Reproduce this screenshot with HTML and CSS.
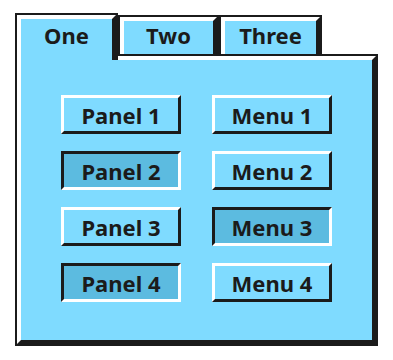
FILE: index.html
```html
<!DOCTYPE html>
<html>
<head>
<meta charset="utf-8">
<link rel="stylesheet" href="styles.css">
</head>
<body>
<div class="frame">
  <div class="tabs">
    <div class="tab tab-active"><div class="tab-inner">One</div></div>
    <div class="tab tab-two"><div class="tab-inner">Two</div></div>
    <div class="tab tab-three"><div class="tab-inner">Three</div></div>
  </div>
  <div class="panel">
    <div class="panel-inner">
      <div class="grid">
        <div class="btn">Panel 1</div>
        <div class="btn">Menu 1</div>
        <div class="btn pressed">Panel 2</div>
        <div class="btn">Menu 2</div>
        <div class="btn">Panel 3</div>
        <div class="btn pressed">Menu 3</div>
        <div class="btn pressed">Panel 4</div>
        <div class="btn">Menu 4</div>
      </div>
    </div>
  </div>
</div>
</body>
</html>
```

FILE: styles.css
```css
html, body {
  margin: 0;
  padding: 0;
  background: #ffffff;
}
body {
  font-family: "Noto Sans", "Open Sans", "DejaVu Sans", sans-serif;
  font-weight: 700;
  color: #1b1b1b;
}
.frame {
  margin: 13px 0 0 15px;
  width: 363px;
}
.tabs {
  display: flex;
  align-items: flex-end;
  height: 41px;
}
.tab {
  border: 2px solid #1b1b1b;
  border-bottom: none;
  box-sizing: border-box;
  background: #7fdbff;
}
.tab-inner {
  border-style: solid;
  border-width: 4px 4px 0 4px;
  border-color: #ffffff #1b1b1b #ffffff #ffffff;
  text-align: center;
  font-size: 22px;
  line-height: 26px;
  box-sizing: border-box;
  height: 100%;
}
.tab-active {
  width: 103px;
  height: 47px;
  margin-bottom: -6px;
  position: relative;
  z-index: 1;
}
.tab-active .tab-inner {
  padding-top: 3px;
}
.tab-two {
  width: 101px;
  height: 39px;
}
.tab-three {
  width: 103px;
  height: 39px;
}
.tab-two .tab-inner,
.tab-three .tab-inner {
  padding-top: 1px;
}
.panel {
  border: 2px solid #1b1b1b;
  height: 292px;
  box-sizing: border-box;
  background: #7fdbff;
}
.panel-inner {
  border-style: solid;
  border-width: 4px;
  border-color: #ffffff #1b1b1b #1b1b1b #ffffff;
  height: 100%;
  box-sizing: border-box;
  padding: 35px 40px 0 40px;
}
.grid {
  display: grid;
  grid-template-columns: 120px 120px;
  column-gap: 31px;
  row-gap: 17px;
}
.btn {
  height: 39px;
  box-sizing: border-box;
  border-style: solid;
  border-width: 3px;
  border-color: #ffffff #1b1b1b #1b1b1b #ffffff;
  background: #7fdbff;
  text-align: center;
  font-size: 22px;
  line-height: 34px;
}
.btn.pressed {
  border-color: #1b1b1b #ffffff #ffffff #1b1b1b;
  background: #5cbbe0;
}
```
